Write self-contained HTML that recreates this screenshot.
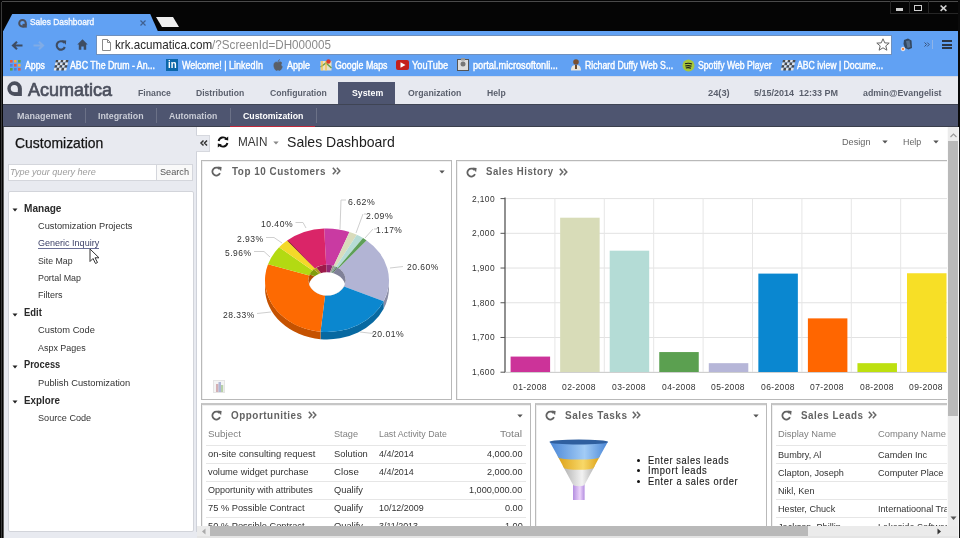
<!DOCTYPE html>
<html><head><meta charset="utf-8"><style>*{margin:0;padding:0;box-sizing:border-box}
html,body{width:960px;height:538px;overflow:hidden;background:#050505;font-family:"Liberation Sans",sans-serif}
.t{position:absolute;white-space:nowrap;line-height:1}
svg{position:absolute;overflow:visible}
</style></head><body>
<div id="w" style="position:absolute;left:0;top:0;width:960px;height:538px;overflow:hidden;filter:blur(0.4px)">
<div class="t" style="left:0px;top:0px;width:960px;height:538px;background:#050505;"></div>
<div class="t" style="left:2px;top:1px;width:956px;height:1px;background:#4a4a4a;"></div>
<div class="t" style="left:1px;top:2px;width:1px;height:536px;background:#3a3a3a;"></div>
<div class="t" style="left:890px;top:1px;width:19.5px;height:12.5px;border:1px solid #262626;border-top:none"></div>
<div class="t" style="left:909px;top:1px;width:19.5px;height:12.5px;border:1px solid #262626;border-top:none;border-left:none"></div>
<div class="t" style="left:928px;top:1px;width:31px;height:12.5px;border:1px solid #262626;border-top:none;border-left:none"></div>
<div class="t" style="left:895.5px;top:8px;width:7.5px;height:2.5px;background:#cfcfcf;"></div>
<div class="t" style="left:913.8px;top:5px;width:8px;height:6px;border:1.6px solid #cfcfcf"></div>
<svg style="left:940px;top:4.6px;" width="7" height="6.4" viewBox="0 0 7 6.4"><path d="M0.6 0.5L6.4 5.9M6.4 0.5L0.6 5.9" stroke="#d0d0d0" stroke-width="1.7"/></svg>
<div class="t" style="left:3px;top:13.5px;width:156px;height:18px;background:#61a1f3;clip-path:polygon(9.5px 0,147px 0,155px 18px,0 18px)"></div>
<div class="t" style="left:156px;top:17px;width:23px;height:10px;background:#eeeeee;clip-path:polygon(0 0,17px 0,23px 10px,6px 10px)"></div>
<svg style="left:17.5px;top:19px;" width="9" height="9" viewBox="0 0 9 9"><circle cx="4.5" cy="4.3" r="3.3" fill="none" stroke="#4b505e" stroke-width="2"/><rect x="4.5" y="4.8" width="4.3" height="3.8" fill="#4b505e"/></svg>
<div class="t" style="left:30.36px;top:17.00px;font-size:9.6px;font-weight:normal;font-style:normal;color:#f6f9ff;transform:scaleX(0.8731);transform-origin:0 0;-webkit-text-stroke:0.35px #f6f9ff;">Sales Dashboard</div>
<svg style="left:140px;top:20px;" width="6" height="6" viewBox="0 0 6 6"><path d="M0.5 0.5L5.5 5.5M5.5 0.5L0.5 5.5" stroke="#40608f" stroke-width="1.2"/></svg>
<div class="t" style="left:3px;top:31px;width:955px;height:45px;background:#61a1f3;"></div>
<svg style="left:11px;top:41px;" width="12" height="9" viewBox="0 0 12 9"><path d="M11.5 4.5H2.5M6 0.8L2 4.5L6 8.2" fill="none" stroke="#3e4c62" stroke-width="2.1"/></svg>
<svg style="left:33px;top:41px;" width="12" height="9" viewBox="0 0 12 9"><path d="M0.5 4.5H9.5M6 0.8L10 4.5L6 8.2" fill="none" stroke="#80ace6" stroke-width="2.1"/></svg>
<svg style="left:55px;top:40px;" width="12" height="11" viewBox="0 0 12 11"><path d="M9.3 3A4.2 4.2 0 1 0 9.8 7" fill="none" stroke="#3e4c62" stroke-width="2.1"/><path d="M6.8 0.2L11.2 0.4L10.8 4.8Z" fill="#3e4c62"/></svg>
<svg style="left:77px;top:39px;" width="11" height="11" viewBox="0 0 11 11"><path d="M5.5 0.3L0.3 5.5H1.8V10.8H4.3V7.5H6.7V10.8H9.2V5.5H10.7Z" fill="#3e4c62"/></svg>
<div class="t" style="left:96px;top:35px;width:796px;height:19.5px;background:#fff;border:1px solid #6f90bd"></div>
<svg style="left:102px;top:39px;" width="9" height="12" viewBox="0 0 9 12"><path d="M0.5 0.5H5.5L8.5 3.5V11.5H0.5Z M5.5 0.5V3.5H8.5" fill="#fff" stroke="#8a8a8a" stroke-width="1"/></svg>
<div class="t" style="left:115.03px;top:39.00px;font-size:12.8px;font-weight:normal;font-style:normal;color:#262626;transform:scaleX(0.9103);transform-origin:0 0;">krk.acumatica.com<span style="color:#8a8a8a">/?ScreenId=DH000005</span></div>
<svg style="left:876px;top:38px;" width="14" height="13" viewBox="0 0 14 13"><path d="M7 0.8L8.8 4.9L13.2 5.1L9.8 7.9L10.9 12.2L7 9.8L3.1 12.2L4.2 7.9L0.8 5.1L5.2 4.9Z" fill="#fff" stroke="#666" stroke-width="1"/></svg>
<svg style="left:901px;top:38px;" width="12" height="14" viewBox="0 0 12 14"><path d="M3 2L7 0.5L10.5 2.5L11 10L7.5 11.5L4 10L2.5 6Z" fill="#33475f"/><path d="M5 3L8.5 2.5L9.5 9L6.5 10Z" fill="#56708f"/><circle cx="2" cy="11" r="1.8" fill="#f08a4a" stroke="#fff" stroke-width="0.8"/></svg>
<svg style="left:924px;top:42.3px;" width="6" height="5" viewBox="0 0 6 5"><path d="M0.5 0.5L2.5 2.5L0.5 4.5M3.2 0.5L5.2 2.5L3.2 4.5" fill="none" stroke="#34486a" stroke-width="0.9"/></svg>
<div class="t" style="left:931.5px;top:40px;width:1px;height:9px;background:#8fb4e8;"></div>
<div class="t" style="left:942.3px;top:40.2px;width:10px;height:1.8px;background:#2b3645;"></div>
<div class="t" style="left:942.3px;top:43.8px;width:10px;height:1.8px;background:#2b3645;"></div>
<div class="t" style="left:942.3px;top:47.4px;width:10px;height:1.8px;background:#2b3645;"></div>
<svg style="left:9.5px;top:60px;" width="11" height="11" viewBox="0 0 11 11"><rect x="0" y="0" width="2.6" height="2.6" fill="#e05a4a"/><rect x="4" y="0" width="2.6" height="2.6" fill="#f0b040"/><rect x="8" y="0" width="2.6" height="2.6" fill="#5aa04a"/><rect x="0" y="4" width="2.6" height="2.6" fill="#4a80e0"/><rect x="4" y="4" width="2.6" height="2.6" fill="#e05a4a"/><rect x="8" y="4" width="2.6" height="2.6" fill="#f0b040"/><rect x="0" y="8" width="2.6" height="2.6" fill="#5aa04a"/><rect x="4" y="8" width="2.6" height="2.6" fill="#4a80e0"/><rect x="8" y="8" width="2.6" height="2.6" fill="#e05a4a"/></svg>
<div class="t" style="left:24.65px;top:61.00px;font-size:10.2px;font-weight:normal;font-style:normal;color:#ffffff;transform:scaleX(0.8603);transform-origin:0 0;-webkit-text-stroke:0.4px #fff;">Apps</div>
<div class="t" style="left:69.65px;top:61.00px;font-size:10.2px;font-weight:normal;font-style:normal;color:#ffffff;transform:scaleX(0.8634);transform-origin:0 0;-webkit-text-stroke:0.4px #fff;">ABC The Drum - An...</div>
<div class="t" style="left:182.14px;top:61.00px;font-size:10.2px;font-weight:normal;font-style:normal;color:#ffffff;transform:scaleX(0.8801);transform-origin:0 0;-webkit-text-stroke:0.4px #fff;">Welcome! | LinkedIn</div>
<div class="t" style="left:287.14px;top:61.00px;font-size:10.2px;font-weight:normal;font-style:normal;color:#ffffff;transform:scaleX(0.8816);transform-origin:0 0;-webkit-text-stroke:0.4px #fff;">Apple</div>
<div class="t" style="left:335.15px;top:61.00px;font-size:10.2px;font-weight:normal;font-style:normal;color:#ffffff;transform:scaleX(0.8654);transform-origin:0 0;-webkit-text-stroke:0.4px #fff;">Google Maps</div>
<div class="t" style="left:412.13px;top:61.00px;font-size:10.2px;font-weight:normal;font-style:normal;color:#ffffff;transform:scaleX(0.9044);transform-origin:0 0;-webkit-text-stroke:0.4px #fff;">YouTube</div>
<div class="t" style="left:473.38px;top:61.00px;font-size:10.2px;font-weight:normal;font-style:normal;color:#ffffff;transform:scaleX(0.9033);transform-origin:0 0;-webkit-text-stroke:0.4px #fff;">portal.microsoftonli...</div>
<div class="t" style="left:585.15px;top:61.00px;font-size:10.2px;font-weight:normal;font-style:normal;color:#ffffff;transform:scaleX(0.8538);transform-origin:0 0;-webkit-text-stroke:0.4px #fff;">Richard Duffy Web S...</div>
<div class="t" style="left:698.40px;top:61.00px;font-size:10.2px;font-weight:normal;font-style:normal;color:#ffffff;transform:scaleX(0.8521);transform-origin:0 0;-webkit-text-stroke:0.4px #fff;">Spotify Web Player</div>
<div class="t" style="left:797.15px;top:61.00px;font-size:10.2px;font-weight:normal;font-style:normal;color:#ffffff;transform:scaleX(0.8516);transform-origin:0 0;-webkit-text-stroke:0.4px #fff;">ABC iview | Docume...</div>
<svg style="left:54px;top:60px;" width="13" height="11" viewBox="0 0 13 11"><g transform="skewX(-12) translate(2,0)"><rect x="0.0" y="0.0" width="2.5" height="2.6" fill="#4a4a4a"/><rect x="2.5" y="0.0" width="2.5" height="2.6" fill="#e4e4e4"/><rect x="5.0" y="0.0" width="2.5" height="2.6" fill="#4a4a4a"/><rect x="7.5" y="0.0" width="2.5" height="2.6" fill="#e4e4e4"/><rect x="10.0" y="0.0" width="2.5" height="2.6" fill="#4a4a4a"/><rect x="0.0" y="2.6" width="2.5" height="2.6" fill="#e4e4e4"/><rect x="2.5" y="2.6" width="2.5" height="2.6" fill="#4a4a4a"/><rect x="5.0" y="2.6" width="2.5" height="2.6" fill="#e4e4e4"/><rect x="7.5" y="2.6" width="2.5" height="2.6" fill="#4a4a4a"/><rect x="10.0" y="2.6" width="2.5" height="2.6" fill="#e4e4e4"/><rect x="0.0" y="5.2" width="2.5" height="2.6" fill="#4a4a4a"/><rect x="2.5" y="5.2" width="2.5" height="2.6" fill="#e4e4e4"/><rect x="5.0" y="5.2" width="2.5" height="2.6" fill="#4a4a4a"/><rect x="7.5" y="5.2" width="2.5" height="2.6" fill="#e4e4e4"/><rect x="10.0" y="5.2" width="2.5" height="2.6" fill="#4a4a4a"/><rect x="0.0" y="7.800000000000001" width="2.5" height="2.6" fill="#e4e4e4"/><rect x="2.5" y="7.800000000000001" width="2.5" height="2.6" fill="#4a4a4a"/><rect x="5.0" y="7.800000000000001" width="2.5" height="2.6" fill="#e4e4e4"/><rect x="7.5" y="7.800000000000001" width="2.5" height="2.6" fill="#4a4a4a"/><rect x="10.0" y="7.800000000000001" width="2.5" height="2.6" fill="#e4e4e4"/></g></svg>
<div class="t" style="left:166px;top:59px;width:12px;height:12px;background:#0b66a8;"></div>
<div class="t" style="left:167.91px;top:59.00px;font-size:10.6px;font-weight:bold;font-style:normal;color:#fff;transform:scaleX(0.9130);transform-origin:0 0;">in</div>
<svg style="left:273px;top:59px;" width="10" height="12" viewBox="0 0 10 12"><path d="M5 3.5C3.5 2.5 0.8 2.8 0.8 6.5C0.8 9 2.5 11.5 3.5 11.5C4.3 11.5 4.5 11 5 11C5.5 11 5.7 11.5 6.5 11.5C7.7 11.5 9.3 9 9.3 7.5C8 7 7.5 5 9 4C8 2.5 6.5 2.5 5 3.5Z M5 3C5 1.5 6 0.5 7 0.5" fill="#5a5f66" stroke="#5a5f66" stroke-width="0.5"/></svg>
<svg style="left:320px;top:59px;" width="12" height="12" viewBox="0 0 12 12"><rect x="0.5" y="2" width="11" height="9.5" fill="#e8e0c8"/><path d="M0.5 8L6 4L11.5 9" stroke="#6aa050" stroke-width="1.5" fill="none"/><path d="M2 2V11.5M6 2V11.5" stroke="#f0c040" stroke-width="1.2"/><circle cx="8.5" cy="2.5" r="2.2" fill="#d83a2a"/></svg>
<div class="t" style="left:396px;top:60px;width:13px;height:10px;background:#c4201c;border-radius:2px"></div>
<svg style="left:400px;top:62px;" width="6" height="6" viewBox="0 0 6 6"><path d="M0.5 0.3L5.5 3L0.5 5.7Z" fill="#fff"/></svg>
<svg style="left:457px;top:58px;" width="12" height="13" viewBox="0 0 12 13"><rect x="0.5" y="1.5" width="11" height="11" fill="#ddd" stroke="#555" stroke-width="1"/><circle cx="6" cy="6" r="2.5" fill="#777"/><rect x="4" y="0" width="4" height="2.5" fill="#999"/></svg>
<svg style="left:570px;top:58px;" width="12" height="13" viewBox="0 0 12 13"><circle cx="6" cy="4" r="2.8" fill="#7a5030"/><path d="M1 12.5C1 8 3 7 6 7C9 7 11 8 11 12.5Z" fill="#e8e4dc"/><path d="M5 7H7V11H5Z" fill="#6a4a2a"/></svg>
<svg style="left:682px;top:59px;" width="13" height="13" viewBox="0 0 13 13"><circle cx="6.5" cy="6.5" r="6" fill="#a8c83a"/><path d="M3 4.8Q6.5 3.6 10 5M3.3 7Q6.5 6 9.5 7.2M3.8 9Q6.5 8.3 9 9.2" stroke="#1a1a1a" stroke-width="1.2" fill="none"/></svg>
<svg style="left:781px;top:60px;" width="13" height="11" viewBox="0 0 13 11"><g transform="skewX(-12) translate(2,0)"><rect x="0.0" y="0.0" width="2.5" height="2.6" fill="#4a4a4a"/><rect x="2.5" y="0.0" width="2.5" height="2.6" fill="#e4e4e4"/><rect x="5.0" y="0.0" width="2.5" height="2.6" fill="#4a4a4a"/><rect x="7.5" y="0.0" width="2.5" height="2.6" fill="#e4e4e4"/><rect x="10.0" y="0.0" width="2.5" height="2.6" fill="#4a4a4a"/><rect x="0.0" y="2.6" width="2.5" height="2.6" fill="#e4e4e4"/><rect x="2.5" y="2.6" width="2.5" height="2.6" fill="#4a4a4a"/><rect x="5.0" y="2.6" width="2.5" height="2.6" fill="#e4e4e4"/><rect x="7.5" y="2.6" width="2.5" height="2.6" fill="#4a4a4a"/><rect x="10.0" y="2.6" width="2.5" height="2.6" fill="#e4e4e4"/><rect x="0.0" y="5.2" width="2.5" height="2.6" fill="#4a4a4a"/><rect x="2.5" y="5.2" width="2.5" height="2.6" fill="#e4e4e4"/><rect x="5.0" y="5.2" width="2.5" height="2.6" fill="#4a4a4a"/><rect x="7.5" y="5.2" width="2.5" height="2.6" fill="#e4e4e4"/><rect x="10.0" y="5.2" width="2.5" height="2.6" fill="#4a4a4a"/><rect x="0.0" y="7.800000000000001" width="2.5" height="2.6" fill="#e4e4e4"/><rect x="2.5" y="7.800000000000001" width="2.5" height="2.6" fill="#4a4a4a"/><rect x="5.0" y="7.800000000000001" width="2.5" height="2.6" fill="#e4e4e4"/><rect x="7.5" y="7.800000000000001" width="2.5" height="2.6" fill="#4a4a4a"/><rect x="10.0" y="7.800000000000001" width="2.5" height="2.6" fill="#e4e4e4"/></g></svg>
<div class="t" style="left:3px;top:76px;width:955px;height:28px;background:#e7e9f0;"></div>
<div class="t" style="left:3px;top:76px;width:955px;height:1px;background:#d5dbe8;"></div>
<svg style="left:7.3px;top:81.3px;" width="15.2" height="15.2" viewBox="0 0 15.2 15.2"><path d="M7.6 0.3A7.3 7.3 0 1 0 7.6 14.9H14.9V7.6A7.3 7.3 0 0 0 7.6 0.3Z" fill="#4b4f5d"/><circle cx="7.3" cy="7.6" r="3.5" fill="#e7e9f0"/><path d="M7.3 7.6H10.8V11.1H7.3Z" fill="#e7e9f0"/></svg>
<div class="t" style="left:28.28px;top:80.00px;font-size:19.2px;font-weight:normal;font-style:normal;color:#4b4f5d;transform:scaleX(0.9371);transform-origin:0 0;-webkit-text-stroke:0.7px #4b4f5d;">Acumatica</div>
<div class="t" style="left:137.95px;top:88.00px;font-size:9.4px;font-weight:bold;font-style:normal;color:#5b606d;transform:scaleX(0.9290);transform-origin:0 0;">Finance</div>
<div class="t" style="left:196.36px;top:88.00px;font-size:9.4px;font-weight:bold;font-style:normal;color:#5b606d;transform:scaleX(0.9159);transform-origin:0 0;">Distribution</div>
<div class="t" style="left:269.65px;top:88.00px;font-size:9.4px;font-weight:bold;font-style:normal;color:#5b606d;transform:scaleX(0.9252);transform-origin:0 0;">Configuration</div>
<div class="t" style="left:408.40px;top:88.00px;font-size:9.4px;font-weight:bold;font-style:normal;color:#5b606d;transform:scaleX(0.9313);transform-origin:0 0;">Organization</div>
<div class="t" style="left:486.95px;top:88.00px;font-size:9.4px;font-weight:bold;font-style:normal;color:#5b606d;transform:scaleX(0.9180);transform-origin:0 0;">Help</div>
<div class="t" style="left:338px;top:82px;width:57px;height:22px;background:#4e5570;"></div>
<div class="t" style="left:352.15px;top:88.00px;font-size:9.4px;font-weight:bold;font-style:normal;color:#ffffff;transform:scaleX(0.9345);transform-origin:0 0;">System</div>
<div class="t" style="left:707.93px;top:88.00px;font-size:9.4px;font-weight:bold;font-style:normal;color:#5b606d;transform:scaleX(0.9889);transform-origin:0 0;">24(3)</div>
<div class="t" style="left:754.34px;top:88.00px;font-size:9.4px;font-weight:bold;font-style:normal;color:#5b606d;transform:scaleX(0.9602);transform-origin:0 0;white-space:pre;">5/15/2014  12:33 PM</div>
<div class="t" style="left:863.45px;top:88.00px;font-size:9.4px;font-weight:bold;font-style:normal;color:#5b606d;transform:scaleX(0.9384);transform-origin:0 0;">admin@Evangelist</div>
<div class="t" style="left:3px;top:104px;width:955px;height:23px;background:#4e5570;"></div>
<div class="t" style="left:3px;top:104px;width:955px;height:1px;background:#3f4454;"></div>
<div class="t" style="left:3px;top:126px;width:955px;height:1px;background:#3b3f4c;"></div>
<div class="t" style="left:84.5px;top:108px;width:1px;height:15px;background:#6b7187;"></div>
<div class="t" style="left:155.5px;top:108px;width:1px;height:15px;background:#6b7187;"></div>
<div class="t" style="left:230px;top:108px;width:1px;height:15px;background:#6b7187;"></div>
<div class="t" style="left:315.5px;top:108px;width:1px;height:15px;background:#6b7187;"></div>
<div class="t" style="left:17.14px;top:111.00px;font-size:9.4px;font-weight:bold;font-style:normal;color:#c9ccd6;transform:scaleX(0.9573);transform-origin:0 0;">Management</div>
<div class="t" style="left:97.55px;top:111.00px;font-size:9.4px;font-weight:bold;font-style:normal;color:#c9ccd6;transform:scaleX(0.9410);transform-origin:0 0;">Integration</div>
<div class="t" style="left:169.25px;top:111.00px;font-size:9.4px;font-weight:bold;font-style:normal;color:#c9ccd6;transform:scaleX(0.9269);transform-origin:0 0;">Automation</div>
<div class="t" style="left:243.15px;top:111.00px;font-size:9.4px;font-weight:bold;font-style:normal;color:#ffffff;transform:scaleX(0.9343);transform-origin:0 0;">Customization</div>
<div class="t" style="left:230px;top:126px;width:85px;height:1.5px;background:#c0283a;"></div>
<div class="t" style="left:3px;top:127px;width:1.5px;height:411px;background:#ffffff;opacity:0.35"></div>
<div class="t" style="left:4px;top:127px;width:193px;height:411px;background:#e8eaf0;"></div>
<div class="t" style="left:196px;top:127px;width:1px;height:411px;background:#cfd2da;"></div>
<div class="t" style="left:15.04px;top:136.00px;font-size:14.4px;font-weight:normal;font-style:normal;color:#141414;transform:scaleX(0.9689);transform-origin:0 0;-webkit-text-stroke:0.25px #141414;">Customization</div>
<div class="t" style="left:8px;top:164px;width:149px;height:17px;background:#fff;border:1px solid #d4d6dc"></div>
<div class="t" style="left:156px;top:164px;width:37px;height:17px;background:#f9f9f9;border:1px solid #d4d6dc"></div>
<div class="t" style="left:10.24px;top:167.00px;font-size:9.4px;font-weight:normal;font-style:italic;color:#9c9c9c;transform:scaleX(0.9701);transform-origin:0 0;">Type your query here</div>
<div class="t" style="left:160.23px;top:168.00px;font-size:9.2px;font-weight:normal;font-style:normal;color:#555;transform:scaleX(0.9949);transform-origin:0 0;">Search</div>
<div class="t" style="left:7.5px;top:191px;width:186px;height:341px;background:#fff;border:1px solid #d2d4da;border-radius:2px"></div>
<svg style="left:11.5px;top:208.3px;" width="6" height="4" viewBox="0 0 6 4"><path d="M0.5 0.5H5.5L3 3.5Z" fill="#222"/></svg>
<div class="t" style="left:24.00px;top:204.00px;font-size:10.4px;font-weight:bold;font-style:normal;color:#2a2a2a;transform:scaleX(0.9685);transform-origin:0 0;">Manage</div>
<div class="t" style="left:37.53px;top:221.00px;font-size:9.6px;font-weight:normal;font-style:normal;color:#333333;transform:scaleX(0.9616);transform-origin:0 0;">Customization Projects</div>
<div class="t" style="left:37.54px;top:238.00px;font-size:9.6px;font-weight:normal;font-style:normal;color:#3b3f66;transform:scaleX(0.9402);transform-origin:0 0;">Generic Inquiry</div>
<div class="t" style="left:37.9px;top:247.5px;width:61.2px;height:1px;background:#6a6e96;"></div>
<div class="t" style="left:37.55px;top:256.00px;font-size:9.6px;font-weight:normal;font-style:normal;color:#333333;transform:scaleX(0.9133);transform-origin:0 0;">Site Map</div>
<div class="t" style="left:37.54px;top:273.00px;font-size:9.6px;font-weight:normal;font-style:normal;color:#333333;transform:scaleX(0.9263);transform-origin:0 0;">Portal Map</div>
<div class="t" style="left:37.54px;top:290.00px;font-size:9.6px;font-weight:normal;font-style:normal;color:#333333;transform:scaleX(0.9375);transform-origin:0 0;">Filters</div>
<svg style="left:11.5px;top:312.5px;" width="6" height="4" viewBox="0 0 6 4"><path d="M0.5 0.5H5.5L3 3.5Z" fill="#222"/></svg>
<div class="t" style="left:24.02px;top:308.00px;font-size:10.4px;font-weight:bold;font-style:normal;color:#2a2a2a;transform:scaleX(0.9062);transform-origin:0 0;">Edit</div>
<div class="t" style="left:37.53px;top:325.00px;font-size:9.6px;font-weight:normal;font-style:normal;color:#333333;transform:scaleX(0.9695);transform-origin:0 0;">Custom Code</div>
<div class="t" style="left:37.54px;top:343.00px;font-size:9.6px;font-weight:normal;font-style:normal;color:#333333;transform:scaleX(0.9311);transform-origin:0 0;">Aspx Pages</div>
<svg style="left:11.5px;top:364.7px;" width="6" height="4" viewBox="0 0 6 4"><path d="M0.5 0.5H5.5L3 3.5Z" fill="#222"/></svg>
<div class="t" style="left:24.03px;top:360.00px;font-size:10.4px;font-weight:bold;font-style:normal;color:#2a2a2a;transform:scaleX(0.8969);transform-origin:0 0;">Process</div>
<div class="t" style="left:37.53px;top:378.00px;font-size:9.6px;font-weight:normal;font-style:normal;color:#333333;transform:scaleX(0.9718);transform-origin:0 0;">Publish Customization</div>
<svg style="left:11.5px;top:400.3px;" width="6" height="4" viewBox="0 0 6 4"><path d="M0.5 0.5H5.5L3 3.5Z" fill="#222"/></svg>
<div class="t" style="left:24.01px;top:396.00px;font-size:10.4px;font-weight:bold;font-style:normal;color:#2a2a2a;transform:scaleX(0.9437);transform-origin:0 0;">Explore</div>
<div class="t" style="left:37.54px;top:413.00px;font-size:9.6px;font-weight:normal;font-style:normal;color:#333333;transform:scaleX(0.9494);transform-origin:0 0;">Source Code</div>
<svg style="left:89px;top:248px;" width="11" height="17" viewBox="0 0 11 17"><path d="M1 1V13.5L4 10.5L6.5 15.5L8.5 14.5L6 9.8H10Z" fill="#fff" stroke="#333" stroke-width="1"/></svg>
<div class="t" style="left:197px;top:127px;width:761px;height:411px;background:#ffffff;"></div>
<div class="t" style="left:196px;top:134.5px;width:14px;height:17px;background:#e8eaf0;border:1px solid #d6d8de;border-left:none"></div>
<svg style="left:199.5px;top:140px;" width="8" height="6" viewBox="0 0 8 6"><path d="M3.5 0.5L1 3L3.5 5.5M7 0.5L4.5 3L7 5.5" fill="none" stroke="#333" stroke-width="1.5"/></svg>
<svg style="left:216.5px;top:136px;" width="12" height="12" viewBox="0 0 12 12"><path d="M1.6 5A4.5 4.5 0 0 1 9.6 3.2" fill="none" stroke="#111" stroke-width="1.9"/><path d="M10.4 7A4.5 4.5 0 0 1 2.4 8.8" fill="none" stroke="#111" stroke-width="1.9"/><path d="M7.2 3.6L11.2 4.6L11.2 0.6Z" fill="#111"/><path d="M4.8 8.4L0.8 7.4L0.8 11.4Z" fill="#111"/></svg>
<div class="t" style="left:238.33px;top:135.00px;font-size:13.2px;font-weight:normal;font-style:normal;color:#383838;transform:scaleX(0.8909);transform-origin:0 0;">MAIN</div>
<svg style="left:272.8px;top:140.6px;" width="6" height="4" viewBox="0 0 6 4"><path d="M0.3 0.5H5.7L3 3.6Z" fill="#888"/></svg>
<div class="t" style="left:286.74px;top:136.00px;font-size:13.9px;font-weight:normal;font-style:normal;color:#1e1e1e;transform:scaleX(1.0119);transform-origin:0 0;">Sales Dashboard</div>
<div class="t" style="left:842.13px;top:137.00px;font-size:9.6px;font-weight:normal;font-style:normal;color:#666;transform:scaleX(0.9537);transform-origin:0 0;">Design</div>
<svg style="left:881.5px;top:140.2px;" width="6" height="4" viewBox="0 0 6 4"><path d="M0.3 0.5H5.7L3 3.6Z" fill="#555"/></svg>
<div class="t" style="left:903.44px;top:137.00px;font-size:9.6px;font-weight:normal;font-style:normal;color:#666;transform:scaleX(0.9269);transform-origin:0 0;">Help</div>
<svg style="left:932.8px;top:140.2px;" width="6" height="4" viewBox="0 0 6 4"><path d="M0.3 0.5H5.7L3 3.6Z" fill="#555"/></svg>
<div class="t" style="left:201px;top:160px;width:251px;height:240px;background:#fff;border:1px solid #b9b9b9;box-shadow:inset 1px 1px 0 #f0f0f0;"></div>
<div class="t" style="left:456px;top:160px;width:520px;height:240px;background:#fff;border:1px solid #b9b9b9;box-shadow:inset 1px 1px 0 #f0f0f0;"></div>
<div class="t" style="left:201px;top:403px;width:330px;height:140px;background:#fff;border:1px solid #b9b9b9;box-shadow:inset 1px 1px 0 #f0f0f0;border-top:2px solid #c6c6c6"></div>
<div class="t" style="left:535px;top:403px;width:232px;height:140px;background:#fff;border:1px solid #b9b9b9;box-shadow:inset 1px 1px 0 #f0f0f0;border-top:2px solid #c6c6c6"></div>
<div class="t" style="left:771px;top:403px;width:200px;height:140px;background:#fff;border:1px solid #b9b9b9;box-shadow:inset 1px 1px 0 #f0f0f0;border-top:2px solid #c6c6c6"></div>
<svg style="left:210.5px;top:166px;" width="11" height="11" viewBox="0 0 11 11"><path d="M8.6 3.2A4 4 0 1 0 9 7.2" fill="none" stroke="#626262" stroke-width="1.8"/><path d="M6.3 0.6L10.6 0.9L10.1 5.2Z" fill="#626262"/></svg>
<div class="t" style="left:231.91px;top:166.00px;font-size:11px;font-weight:bold;font-style:normal;color:#636363;transform:scaleX(0.8974);transform-origin:0 0;letter-spacing:0.6px;">Top 10 Customers</div>
<svg style="left:331.5px;top:167.2px;" width="9" height="8" viewBox="0 0 9 8"><path d="M0.8 0.8L3.8 4L0.8 7.2M4.8 0.8L7.8 4L4.8 7.2" fill="none" stroke="#666" stroke-width="1.5"/></svg>
<svg style="left:438.5px;top:169.5px;" width="6" height="4" viewBox="0 0 6 4"><path d="M0.3 0.5H5.7L3 3.6Z" fill="#555"/></svg>
<svg style="left:465.5px;top:166.5px;" width="11" height="11" viewBox="0 0 11 11"><path d="M8.6 3.2A4 4 0 1 0 9 7.2" fill="none" stroke="#626262" stroke-width="1.8"/><path d="M6.3 0.6L10.6 0.9L10.1 5.2Z" fill="#626262"/></svg>
<div class="t" style="left:486.32px;top:166.00px;font-size:11px;font-weight:bold;font-style:normal;color:#636363;transform:scaleX(0.8710);transform-origin:0 0;letter-spacing:0.6px;">Sales History</div>
<svg style="left:559.2px;top:167.5px;" width="9" height="8" viewBox="0 0 9 8"><path d="M0.8 0.8L3.8 4L0.8 7.2M4.8 0.8L7.8 4L4.8 7.2" fill="none" stroke="#666" stroke-width="1.5"/></svg>
<svg style="left:210.5px;top:410px;" width="11" height="11" viewBox="0 0 11 11"><path d="M8.6 3.2A4 4 0 1 0 9 7.2" fill="none" stroke="#626262" stroke-width="1.8"/><path d="M6.3 0.6L10.6 0.9L10.1 5.2Z" fill="#626262"/></svg>
<div class="t" style="left:230.81px;top:410.00px;font-size:11px;font-weight:bold;font-style:normal;color:#636363;transform:scaleX(0.8960);transform-origin:0 0;letter-spacing:0.6px;">Opportunities</div>
<svg style="left:308.2px;top:411.3px;" width="9" height="8" viewBox="0 0 9 8"><path d="M0.8 0.8L3.8 4L0.8 7.2M4.8 0.8L7.8 4L4.8 7.2" fill="none" stroke="#666" stroke-width="1.5"/></svg>
<svg style="left:516.8px;top:413.5px;" width="6" height="4" viewBox="0 0 6 4"><path d="M0.3 0.5H5.7L3 3.6Z" fill="#555"/></svg>
<svg style="left:544.5px;top:410px;" width="11" height="11" viewBox="0 0 11 11"><path d="M8.6 3.2A4 4 0 1 0 9 7.2" fill="none" stroke="#626262" stroke-width="1.8"/><path d="M6.3 0.6L10.6 0.9L10.1 5.2Z" fill="#626262"/></svg>
<div class="t" style="left:564.60px;top:410.00px;font-size:11px;font-weight:bold;font-style:normal;color:#636363;transform:scaleX(0.9102);transform-origin:0 0;letter-spacing:0.6px;">Sales Tasks</div>
<svg style="left:632px;top:411.3px;" width="9" height="8" viewBox="0 0 9 8"><path d="M0.8 0.8L3.8 4L0.8 7.2M4.8 0.8L7.8 4L4.8 7.2" fill="none" stroke="#666" stroke-width="1.5"/></svg>
<svg style="left:753.2px;top:413.5px;" width="6" height="4" viewBox="0 0 6 4"><path d="M0.3 0.5H5.7L3 3.6Z" fill="#555"/></svg>
<svg style="left:781px;top:410px;" width="11" height="11" viewBox="0 0 11 11"><path d="M8.6 3.2A4 4 0 1 0 9 7.2" fill="none" stroke="#626262" stroke-width="1.8"/><path d="M6.3 0.6L10.6 0.9L10.1 5.2Z" fill="#626262"/></svg>
<div class="t" style="left:800.61px;top:410.00px;font-size:11px;font-weight:bold;font-style:normal;color:#636363;transform:scaleX(0.8918);transform-origin:0 0;letter-spacing:0.6px;">Sales Leads</div>
<svg style="left:868px;top:411.3px;" width="9" height="8" viewBox="0 0 9 8"><path d="M0.8 0.8L3.8 4L0.8 7.2M4.8 0.8L7.8 4L4.8 7.2" fill="none" stroke="#666" stroke-width="1.5"/></svg>
<div class="t" style="left:208.30px;top:429.00px;font-size:9.6px;font-weight:normal;font-style:normal;color:#808080;transform:scaleX(1.0306);transform-origin:0 0;">Subject</div>
<div class="t" style="left:334.03px;top:429.00px;font-size:9.6px;font-weight:normal;font-style:normal;color:#808080;transform:scaleX(0.9566);transform-origin:0 0;">Stage</div>
<div class="t" style="left:378.95px;top:429.00px;font-size:9.6px;font-weight:normal;font-style:normal;color:#808080;transform:scaleX(0.9222);transform-origin:0 0;">Last Activity Date</div>
<div class="t" style="left:500.28px;top:429.00px;font-size:9.6px;font-weight:normal;font-style:normal;color:#808080;transform:scaleX(1.0849);transform-origin:0 0;">Total</div>
<div class="t" style="left:206px;top:445px;width:320px;height:1px;background:#e6e6e6;"></div>
<div class="t" style="left:206px;top:463px;width:320px;height:1px;background:#e6e6e6;"></div>
<div class="t" style="left:206px;top:481px;width:320px;height:1px;background:#e6e6e6;"></div>
<div class="t" style="left:206px;top:499px;width:320px;height:1px;background:#e6e6e6;"></div>
<div class="t" style="left:206px;top:517px;width:320px;height:1px;background:#e6e6e6;"></div>
<div class="t" style="left:208.32px;top:449.00px;font-size:9.6px;font-weight:normal;font-style:normal;color:#333333;transform:scaleX(0.9817);transform-origin:0 0;">on-site consulting request</div>
<div class="t" style="left:334.03px;top:449.00px;font-size:9.6px;font-weight:normal;font-style:normal;color:#333333;transform:scaleX(0.9743);transform-origin:0 0;">Solution</div>
<div class="t" style="left:379.34px;top:449.00px;font-size:9.6px;font-weight:normal;font-style:normal;color:#333333;transform:scaleX(0.9300);transform-origin:0 0;">4/4/2014</div>
<div class="t" style="left:486.83px;top:449.00px;font-size:9.6px;font-weight:normal;font-style:normal;color:#333333;transform:scaleX(0.9500);transform-origin:0 0;">4,000.00</div>
<div class="t" style="left:208.33px;top:467.00px;font-size:9.6px;font-weight:normal;font-style:normal;color:#333333;transform:scaleX(0.9718);transform-origin:0 0;">volume widget purchase</div>
<div class="t" style="left:334.01px;top:467.00px;font-size:9.6px;font-weight:normal;font-style:normal;color:#333333;transform:scaleX(1.0104);transform-origin:0 0;">Close</div>
<div class="t" style="left:379.34px;top:467.00px;font-size:9.6px;font-weight:normal;font-style:normal;color:#333333;transform:scaleX(0.9300);transform-origin:0 0;">4/4/2014</div>
<div class="t" style="left:486.83px;top:467.00px;font-size:9.6px;font-weight:normal;font-style:normal;color:#333333;transform:scaleX(0.9500);transform-origin:0 0;">2,000.00</div>
<div class="t" style="left:208.34px;top:485.00px;font-size:9.6px;font-weight:normal;font-style:normal;color:#333333;transform:scaleX(0.9406);transform-origin:0 0;">Opportunity with attributes</div>
<div class="t" style="left:334.03px;top:485.00px;font-size:9.6px;font-weight:normal;font-style:normal;color:#333333;transform:scaleX(0.9706);transform-origin:0 0;">Qualify</div>
<div class="t" style="left:469.08px;top:485.00px;font-size:9.6px;font-weight:normal;font-style:normal;color:#333333;transform:scaleX(0.9500);transform-origin:0 0;">1,000,000.00</div>
<div class="t" style="left:208.33px;top:503.00px;font-size:9.6px;font-weight:normal;font-style:normal;color:#333333;transform:scaleX(0.9681);transform-origin:0 0;">75 % Possible Contract</div>
<div class="t" style="left:334.03px;top:503.00px;font-size:9.6px;font-weight:normal;font-style:normal;color:#333333;transform:scaleX(0.9706);transform-origin:0 0;">Qualify</div>
<div class="t" style="left:379.34px;top:503.00px;font-size:9.6px;font-weight:normal;font-style:normal;color:#333333;transform:scaleX(0.9300);transform-origin:0 0;">10/12/2009</div>
<div class="t" style="left:504.58px;top:503.00px;font-size:9.6px;font-weight:normal;font-style:normal;color:#333333;transform:scaleX(0.9500);transform-origin:0 0;">0.00</div>
<div class="t" style="left:208.33px;top:521.00px;font-size:9.6px;font-weight:normal;font-style:normal;color:#333333;transform:scaleX(0.9681);transform-origin:0 0;">50 % Possible Contract</div>
<div class="t" style="left:334.03px;top:521.00px;font-size:9.6px;font-weight:normal;font-style:normal;color:#333333;transform:scaleX(0.9706);transform-origin:0 0;">Qualify</div>
<div class="t" style="left:379.34px;top:521.00px;font-size:9.6px;font-weight:normal;font-style:normal;color:#333333;transform:scaleX(0.9300);transform-origin:0 0;">3/11/2013</div>
<div class="t" style="left:504.58px;top:521.00px;font-size:9.6px;font-weight:normal;font-style:normal;color:#333333;transform:scaleX(0.9500);transform-origin:0 0;">1.00</div>
<div class="t" style="left:637px;top:458.8px;width:3px;height:3px;background:#111;border-radius:50%"></div>
<div class="t" style="left:647.73px;top:456.00px;font-size:10.2px;font-weight:normal;font-style:normal;color:#1c1c1c;transform:scaleX(0.9019);transform-origin:0 0;letter-spacing:0.7px;-webkit-text-stroke:0.15px #1c1c1c;">Enter sales leads</div>
<div class="t" style="left:637px;top:469.3px;width:3px;height:3px;background:#111;border-radius:50%"></div>
<div class="t" style="left:647.72px;top:466.00px;font-size:10.2px;font-weight:normal;font-style:normal;color:#1c1c1c;transform:scaleX(0.9206);transform-origin:0 0;letter-spacing:0.7px;-webkit-text-stroke:0.15px #1c1c1c;">Import leads</div>
<div class="t" style="left:637px;top:479.8px;width:3px;height:3px;background:#111;border-radius:50%"></div>
<div class="t" style="left:647.73px;top:477.00px;font-size:10.2px;font-weight:normal;font-style:normal;color:#1c1c1c;transform:scaleX(0.9087);transform-origin:0 0;letter-spacing:0.7px;-webkit-text-stroke:0.15px #1c1c1c;">Enter a sales order</div>
<div class="t" style="left:778.13px;top:429.00px;font-size:9.6px;font-weight:normal;font-style:normal;color:#808080;transform:scaleX(0.9757);transform-origin:0 0;">Display Name</div>
<div class="t" style="left:878.02px;top:429.00px;font-size:9.6px;font-weight:normal;font-style:normal;color:#808080;transform:scaleX(0.9804);transform-origin:0 0;">Company Name</div>
<div class="t" style="left:776px;top:444.5px;width:172px;height:1px;background:#e6e6e6;"></div>
<div class="t" style="left:776px;top:463px;width:172px;height:1px;background:#e6e6e6;"></div>
<div class="t" style="left:776px;top:481px;width:172px;height:1px;background:#e6e6e6;"></div>
<div class="t" style="left:776px;top:499px;width:172px;height:1px;background:#e6e6e6;"></div>
<div class="t" style="left:776px;top:517px;width:172px;height:1px;background:#e6e6e6;"></div>
<div class="t" style="left:778.14px;top:450.00px;font-size:9.6px;font-weight:normal;font-style:normal;color:#333333;transform:scaleX(0.9500);transform-origin:0 0;">Bumbry, Al</div>
<div class="t" style="left:878.04px;top:450.00px;font-size:9.6px;font-weight:normal;font-style:normal;color:#333333;transform:scaleX(0.9500);transform-origin:0 0;">Camden Inc</div>
<div class="t" style="left:778.14px;top:468.00px;font-size:9.6px;font-weight:normal;font-style:normal;color:#333333;transform:scaleX(0.9500);transform-origin:0 0;">Clapton, Joseph</div>
<div class="t" style="left:878.04px;top:468.00px;font-size:9.6px;font-weight:normal;font-style:normal;color:#333333;transform:scaleX(0.9500);transform-origin:0 0;">Computer Place</div>
<div class="t" style="left:778.14px;top:486.00px;font-size:9.6px;font-weight:normal;font-style:normal;color:#333333;transform:scaleX(0.9500);transform-origin:0 0;">Nikl, Ken</div>
<div class="t" style="left:778.14px;top:504.00px;font-size:9.6px;font-weight:normal;font-style:normal;color:#333333;transform:scaleX(0.9500);transform-origin:0 0;">Hester, Chuck</div>
<div class="t" style="left:878.04px;top:504.00px;font-size:9.6px;font-weight:normal;font-style:normal;color:#333333;transform:scaleX(0.9500);transform-origin:0 0;">Internatioonal Trade</div>
<div class="t" style="left:778.14px;top:522.00px;font-size:9.6px;font-weight:normal;font-style:normal;color:#333333;transform:scaleX(0.9500);transform-origin:0 0;">Jackson, Phillip</div>
<div class="t" style="left:878.04px;top:522.00px;font-size:9.6px;font-weight:normal;font-style:normal;color:#333333;transform:scaleX(0.9500);transform-origin:0 0;">Lakeside Software</div>
<svg style="left:0px;top:0px;" width="960" height="538" viewBox="0 0 960 538"><defs><clipPath id="hole"><ellipse cx="327.0" cy="280.2" rx="18.6" ry="15.4"/></clipPath></defs><path d="M389.00 280.20 A62.0 51.8 0 0 1 383.67 301.21 L383.67 308.71 A62.0 51.8 0 0 0 389.00 287.70 Z" fill="#8a8ca5"/><path d="M383.67 301.21 A62.0 51.8 0 0 1 320.55 331.72 L320.55 339.22 A62.0 51.8 0 0 0 383.67 308.71 Z" fill="#0869a1"/><path d="M320.55 331.72 A62.0 51.8 0 0 1 265.00 280.20 L265.00 287.70 A62.0 51.8 0 0 0 320.55 339.22 Z" fill="#c55201"/><path d="M324.19 228.45 A62.0 51.8 0 0 1 349.45 231.92 L333.74 265.85 A18.6 15.4 0 0 0 326.16 264.82 Z" fill="#c93aa2"/><path d="M349.45 231.92 A62.0 51.8 0 0 1 356.83 234.79 L335.95 266.70 A18.6 15.4 0 0 0 333.74 265.85 Z" fill="#d9dcbc"/><path d="M356.83 234.79 A62.0 51.8 0 0 1 363.06 238.06 L337.82 267.67 A18.6 15.4 0 0 0 335.95 266.70 Z" fill="#b6dcd6"/><path d="M363.06 238.06 A62.0 51.8 0 0 1 366.66 240.39 L338.90 268.36 A18.6 15.4 0 0 0 337.82 267.67 Z" fill="#5e9f58"/><path d="M366.66 240.39 A62.0 51.8 0 0 1 383.67 301.21 L344.00 286.45 A18.6 15.4 0 0 0 338.90 268.36 Z" fill="#b2b4d4"/><path d="M383.67 301.21 A62.0 51.8 0 0 1 320.55 331.72 L325.07 295.52 A18.6 15.4 0 0 0 344.00 286.45 Z" fill="#0b87cf"/><path d="M320.55 331.72 A62.0 51.8 0 0 1 268.02 264.23 L309.31 275.45 A18.6 15.4 0 0 0 325.07 295.52 Z" fill="#fd6a02"/><path d="M268.02 264.23 A62.0 51.8 0 0 1 279.10 247.31 L312.63 270.42 A18.6 15.4 0 0 0 309.31 275.45 Z" fill="#b3da12"/><path d="M279.10 247.31 A62.0 51.8 0 0 1 287.11 240.54 L315.03 268.41 A18.6 15.4 0 0 0 312.63 270.42 Z" fill="#f4d929"/><path d="M287.11 240.54 A62.0 51.8 0 0 1 324.19 228.45 L326.16 264.82 A18.6 15.4 0 0 0 315.03 268.41 Z" fill="#da2568"/><g clip-path="url(#hole)"><path d="M327.0 280.2 L324.28 220.26 L339.95 201.26 L348.73 224.27 Z" fill="#902974"/><path d="M327.0 280.2 L348.73 224.27 L360.80 207.69 L355.86 227.60 Z" fill="#9c9e87"/><path d="M327.0 280.2 L355.86 227.60 L369.58 212.47 L361.89 231.39 Z" fill="#839e9a"/><path d="M327.0 280.2 L361.89 231.39 L375.88 216.87 L365.38 234.08 Z" fill="#43723f"/><path d="M327.0 280.2 L365.38 234.08 L404.90 262.00 L381.84 304.54 Z" fill="#808198"/><path d="M327.0 280.2 L381.84 304.54 L367.06 349.45 L320.76 339.87 Z" fill="#076195"/><path d="M327.0 280.2 L320.76 339.87 L259.94 323.82 L269.92 261.70 Z" fill="#b64c01"/><path d="M327.0 280.2 L269.92 261.70 L256.82 241.80 L280.64 242.11 Z" fill="#809c0c"/><path d="M327.0 280.2 L280.64 242.11 L270.12 223.94 L288.40 234.26 Z" fill="#af9c1d"/><path d="M327.0 280.2 L288.40 234.26 L297.91 205.67 L324.28 220.26 Z" fill="#9c1a4a"/><ellipse cx="327.0" cy="287.7" rx="18.6" ry="15.4" fill="#fff"/></g><path d="M315.03 268.41 L287.11 240.54 L289.31 241.74 L316.53 269.91 Z" fill="#6b2d1e"/><path d="M341 200 H346 M341 200 L340 229" fill="none" stroke="#cfcfcf" stroke-width="1"/><path d="M364 214 H366 M363 214 L356 233" fill="none" stroke="#cfcfcf" stroke-width="1"/><path d="M374 229 H377 M373 229 L365 238" fill="none" stroke="#cfcfcf" stroke-width="1"/><path d="M403 266.5 L390 268" fill="none" stroke="#cfcfcf" stroke-width="1"/><path d="M373 333.5 L360 332" fill="none" stroke="#cfcfcf" stroke-width="1"/><path d="M257 313.5 L271 312" fill="none" stroke="#cfcfcf" stroke-width="1"/><path d="M254 251.5 H264 L270 257" fill="none" stroke="#cfcfcf" stroke-width="1"/><path d="M266 237.5 H274 L282 243" fill="none" stroke="#cfcfcf" stroke-width="1"/><path d="M295.5 222.5 H303 L306 228" fill="none" stroke="#cfcfcf" stroke-width="1"/></svg>
<div class="t" style="left:347.65px;top:198.00px;font-size:8.8px;font-weight:normal;font-style:normal;color:#303030;transform:scaleX(0.9908);transform-origin:0 0;letter-spacing:0.5px;">6.62%</div>
<div class="t" style="left:366.45px;top:212.00px;font-size:8.8px;font-weight:normal;font-style:normal;color:#303030;transform:scaleX(0.9872);transform-origin:0 0;letter-spacing:0.5px;">2.09%</div>
<div class="t" style="left:376.16px;top:226.00px;font-size:8.8px;font-weight:normal;font-style:normal;color:#303030;transform:scaleX(0.9580);transform-origin:0 0;letter-spacing:0.5px;">1.17%</div>
<div class="t" style="left:407.46px;top:263.00px;font-size:8.8px;font-weight:normal;font-style:normal;color:#303030;transform:scaleX(0.9681);transform-origin:0 0;letter-spacing:0.5px;">20.60%</div>
<div class="t" style="left:372.45px;top:330.00px;font-size:8.8px;font-weight:normal;font-style:normal;color:#303030;transform:scaleX(0.9803);transform-origin:0 0;letter-spacing:0.5px;">20.01%</div>
<div class="t" style="left:223.36px;top:311.00px;font-size:8.8px;font-weight:normal;font-style:normal;color:#303030;transform:scaleX(0.9681);transform-origin:0 0;letter-spacing:0.5px;">28.33%</div>
<div class="t" style="left:225.26px;top:249.00px;font-size:8.8px;font-weight:normal;font-style:normal;color:#303030;transform:scaleX(0.9617);transform-origin:0 0;letter-spacing:0.5px;">5.96%</div>
<div class="t" style="left:237.16px;top:235.00px;font-size:8.8px;font-weight:normal;font-style:normal;color:#303030;transform:scaleX(0.9726);transform-origin:0 0;letter-spacing:0.5px;">2.93%</div>
<div class="t" style="left:260.96px;top:220.00px;font-size:8.8px;font-weight:normal;font-style:normal;color:#303030;transform:scaleX(0.9742);transform-origin:0 0;letter-spacing:0.5px;">10.40%</div>
<svg style="left:213px;top:380px;" width="12" height="13" viewBox="0 0 12 13"><rect x="0.5" y="0.5" width="11" height="12" fill="#f4f4f4" stroke="#e4e4e4" stroke-width="1"/><rect x="3" y="4" width="2.5" height="8" fill="#d4b0b4"/><rect x="5.5" y="2" width="2.5" height="10" fill="#b0b8d8"/><rect x="8" y="5" width="2.2" height="7" fill="#b8d0a8"/></svg>
<svg style="left:0px;top:0px;" width="960" height="538" viewBox="0 0 960 538"><path d="M505 372.20 H947" stroke="#e2e2e2" stroke-width="1"/><path d="M500.5 372.20 H505" stroke="#555" stroke-width="1"/><path d="M505 337.48 H947" stroke="#e2e2e2" stroke-width="1"/><path d="M500.5 337.48 H505" stroke="#555" stroke-width="1"/><path d="M505 302.76 H947" stroke="#e2e2e2" stroke-width="1"/><path d="M500.5 302.76 H505" stroke="#555" stroke-width="1"/><path d="M505 268.04 H947" stroke="#e2e2e2" stroke-width="1"/><path d="M500.5 268.04 H505" stroke="#555" stroke-width="1"/><path d="M505 233.32 H947" stroke="#e2e2e2" stroke-width="1"/><path d="M500.5 233.32 H505" stroke="#555" stroke-width="1"/><path d="M505 198.60 H947" stroke="#e2e2e2" stroke-width="1"/><path d="M500.5 198.60 H505" stroke="#555" stroke-width="1"/><path d="M554.90 198.5 V372" stroke="#e6e6e6" stroke-width="1"/><path d="M604.30 198.5 V372" stroke="#e6e6e6" stroke-width="1"/><path d="M653.70 198.5 V372" stroke="#e6e6e6" stroke-width="1"/><path d="M703.10 198.5 V372" stroke="#e6e6e6" stroke-width="1"/><path d="M752.50 198.5 V372" stroke="#e6e6e6" stroke-width="1"/><path d="M801.90 198.5 V372" stroke="#e6e6e6" stroke-width="1"/><path d="M851.30 198.5 V372" stroke="#e6e6e6" stroke-width="1"/><path d="M900.70 198.5 V372" stroke="#e6e6e6" stroke-width="1"/><rect x="510.60" y="356.58" width="39.5" height="15.62" fill="#cc3399"/><rect x="560.15" y="217.70" width="39.5" height="154.50" fill="#d8dcb8"/><rect x="609.70" y="250.68" width="39.5" height="121.52" fill="#b4dcd6"/><rect x="659.25" y="352.06" width="39.5" height="20.14" fill="#5ba050"/><rect x="708.80" y="363.17" width="39.5" height="9.03" fill="#b6b6d8"/><rect x="758.35" y="273.60" width="39.5" height="98.60" fill="#0a87d0"/><rect x="807.90" y="318.38" width="39.5" height="53.82" fill="#ff6600"/><rect x="857.45" y="363.17" width="39.5" height="9.03" fill="#bde010"/><rect x="907.00" y="273.25" width="39.5" height="98.95" fill="#f7df26"/><path d="M505 197.5 V372.5" stroke="#555" stroke-width="1.3"/><path d="M505 372.5 H947" stroke="#cfcfcf" stroke-width="1"/></svg>
<div class="t" style="left:471.96px;top:195.00px;font-size:8.8px;font-weight:normal;font-style:normal;color:#333;transform:scaleX(0.9575);transform-origin:0 0;letter-spacing:0.4px;">2,100</div>
<div class="t" style="left:471.96px;top:229.00px;font-size:8.8px;font-weight:normal;font-style:normal;color:#333;transform:scaleX(0.9575);transform-origin:0 0;letter-spacing:0.4px;">2,000</div>
<div class="t" style="left:471.96px;top:264.00px;font-size:8.8px;font-weight:normal;font-style:normal;color:#333;transform:scaleX(0.9575);transform-origin:0 0;letter-spacing:0.4px;">1,900</div>
<div class="t" style="left:471.96px;top:299.00px;font-size:8.8px;font-weight:normal;font-style:normal;color:#333;transform:scaleX(0.9575);transform-origin:0 0;letter-spacing:0.4px;">1,800</div>
<div class="t" style="left:471.96px;top:333.00px;font-size:8.8px;font-weight:normal;font-style:normal;color:#333;transform:scaleX(0.9575);transform-origin:0 0;letter-spacing:0.4px;">1,700</div>
<div class="t" style="left:471.96px;top:368.00px;font-size:8.8px;font-weight:normal;font-style:normal;color:#333;transform:scaleX(0.9575);transform-origin:0 0;letter-spacing:0.4px;">1,600</div>
<div class="t" style="left:512.86px;top:383.00px;font-size:8.8px;font-weight:normal;font-style:normal;color:#333;transform:scaleX(0.9688);transform-origin:0 0;letter-spacing:0.4px;">01-2008</div>
<div class="t" style="left:562.41px;top:383.00px;font-size:8.8px;font-weight:normal;font-style:normal;color:#333;transform:scaleX(0.9688);transform-origin:0 0;letter-spacing:0.4px;">02-2008</div>
<div class="t" style="left:611.96px;top:383.00px;font-size:8.8px;font-weight:normal;font-style:normal;color:#333;transform:scaleX(0.9688);transform-origin:0 0;letter-spacing:0.4px;">03-2008</div>
<div class="t" style="left:661.51px;top:383.00px;font-size:8.8px;font-weight:normal;font-style:normal;color:#333;transform:scaleX(0.9688);transform-origin:0 0;letter-spacing:0.4px;">04-2008</div>
<div class="t" style="left:711.06px;top:383.00px;font-size:8.8px;font-weight:normal;font-style:normal;color:#333;transform:scaleX(0.9688);transform-origin:0 0;letter-spacing:0.4px;">05-2008</div>
<div class="t" style="left:760.61px;top:383.00px;font-size:8.8px;font-weight:normal;font-style:normal;color:#333;transform:scaleX(0.9688);transform-origin:0 0;letter-spacing:0.4px;">06-2008</div>
<div class="t" style="left:810.16px;top:383.00px;font-size:8.8px;font-weight:normal;font-style:normal;color:#333;transform:scaleX(0.9688);transform-origin:0 0;letter-spacing:0.4px;">07-2008</div>
<div class="t" style="left:859.71px;top:383.00px;font-size:8.8px;font-weight:normal;font-style:normal;color:#333;transform:scaleX(0.9688);transform-origin:0 0;letter-spacing:0.4px;">08-2008</div>
<div class="t" style="left:909.26px;top:383.00px;font-size:8.8px;font-weight:normal;font-style:normal;color:#333;transform:scaleX(0.9688);transform-origin:0 0;letter-spacing:0.4px;">09-2008</div>
<svg style="left:0px;top:0px;" width="960" height="538" viewBox="0 0 960 538"><defs><linearGradient id="fb" x1="0" x2="1"><stop offset="0" stop-color="#4a86d6"/><stop offset="0.6" stop-color="#a2ccf6"/><stop offset="1" stop-color="#4a86d6"/></linearGradient><linearGradient id="fy" x1="0" x2="1"><stop offset="0" stop-color="#dca016"/><stop offset="0.6" stop-color="#f8d868"/><stop offset="1" stop-color="#dca016"/></linearGradient><linearGradient id="fg" x1="0" x2="1"><stop offset="0" stop-color="#b0b0b0"/><stop offset="0.6" stop-color="#f2f2f2"/><stop offset="1" stop-color="#b0b0b0"/></linearGradient><linearGradient id="fp" x1="0" x2="1"><stop offset="0" stop-color="#b48ee0"/><stop offset="0.6" stop-color="#ecd4fa"/><stop offset="1" stop-color="#b48ee0"/></linearGradient></defs><path d="M573 483 H584.6 V500 H573 Z" fill="url(#fp)"/><path d="M562.6 465.5 L595 465.5 L584.6 484.8 A5.8 1.5 0 0 1 573 484.8 Z" fill="url(#fg)"/><path d="M557.3 455.5 L600.3 455.5 L593.7 467.8 A14.9 2 0 0 1 563.9 467.8 Z" fill="url(#fy)"/><path d="M549.7 441.8 L607.9 441.8 L599.3 457.3 A20.5 2.3 0 0 1 558.3 457.3 Z" fill="url(#fb)"/><ellipse cx="578.75" cy="442" rx="29.3" ry="2.4" fill="#2f5f9f"/></svg>
<div class="t" style="left:947px;top:127px;width:12px;height:399px;background:#ececec;"></div>
<div class="t" style="left:947px;top:127px;width:1px;height:399px;background:#fafafa;"></div>
<div class="t" style="left:958px;top:127px;width:1px;height:411px;background:#f6f6f6;"></div>
<div class="t" style="left:948px;top:140.5px;width:10px;height:275px;background:#b9b9b9;"></div>
<svg style="left:949.5px;top:132.5px;" width="7" height="5" viewBox="0 0 7 5"><path d="M0.5 4L3.5 1L6.5 4" fill="none" stroke="#9a9a9a" stroke-width="1.2"/></svg>
<svg style="left:949.5px;top:515.5px;" width="7" height="5" viewBox="0 0 7 5"><path d="M0.5 0.5H6.5L3.5 4Z" fill="#555"/></svg>
<div class="t" style="left:197px;top:525.5px;width:761px;height:12.5px;background:#ebebeb;"></div>
<div class="t" style="left:210px;top:526px;width:598px;height:10px;background:#b9b9b9;"></div>
<svg style="left:200.5px;top:527.5px;" width="5" height="7" viewBox="0 0 5 7"><path d="M4.5 0.5V6.5L1 3.5Z" fill="#aaa"/></svg>
<svg style="left:937px;top:527.5px;" width="5" height="7" viewBox="0 0 5 7"><path d="M0.5 0.5V6.5L4 3.5Z" fill="#333"/></svg>
<div class="t" style="left:197px;top:536px;width:761px;height:2px;background:#e4e4e4;"></div>
<div class="t" style="left:4px;top:532px;width:193px;height:6px;background:#e8eaf0;"></div>
<div class="t" style="left:958px;top:0px;width:2px;height:127px;background:#0a0a0a;"></div>
<div class="t" style="left:959px;top:127px;width:1px;height:411px;background:#151515;"></div>
</div></body></html>
